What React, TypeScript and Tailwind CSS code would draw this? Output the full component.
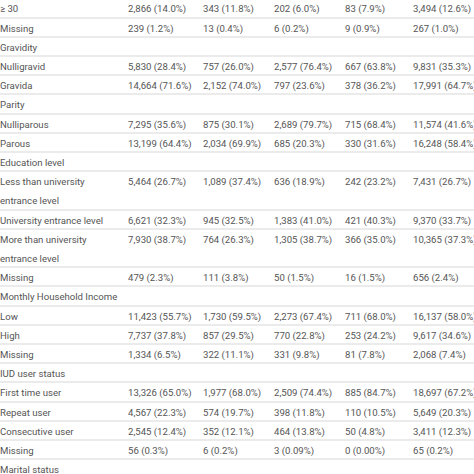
import React from "react";

type Row = { label: string[]; vals?: string[] };

const rows: Row[] = [
  { label: ["≥ 30"], vals: ["2,866 (14.0%)", "343 (11.8%)", "202 (6.0%)", "83 (7.9%)", "3,494 (12.6%)"] },
  { label: ["Missing"], vals: ["239 (1.2%)", "13 (0.4%)", "6 (0.2%)", "9 (0.9%)", "267 (1.0%)"] },
  { label: ["Gravidity"] },
  { label: ["Nulligravid"], vals: ["5,830 (28.4%)", "757 (26.0%)", "2,577 (76.4%)", "667 (63.8%)", "9,831 (35.3%)"] },
  { label: ["Gravida"], vals: ["14,664 (71.6%)", "2,152 (74.0%)", "797 (23.6%)", "378 (36.2%)", "17,991 (64.7%)"] },
  { label: ["Parity"] },
  { label: ["Nulliparous"], vals: ["7,295 (35.6%)", "875 (30.1%)", "2,689 (79.7%)", "715 (68.4%)", "11,574 (41.6%)"] },
  { label: ["Parous"], vals: ["13,199 (64.4%)", "2,034 (69.9%)", "685 (20.3%)", "330 (31.6%)", "16,248 (58.4%)"] },
  { label: ["Education level"] },
  { label: ["Less than university", "entrance level"], vals: ["5,464 (26.7%)", "1,089 (37.4%)", "636 (18.9%)", "242 (23.2%)", "7,431 (26.7%)"] },
  { label: ["University entrance level"], vals: ["6,621 (32.3%)", "945 (32.5%)", "1,383 (41.0%)", "421 (40.3%)", "9,370 (33.7%)"] },
  { label: ["More than university", "entrance level"], vals: ["7,930 (38.7%)", "764 (26.3%)", "1,305 (38.7%)", "366 (35.0%)", "10,365 (37.3%)"] },
  { label: ["Missing"], vals: ["479 (2.3%)", "111 (3.8%)", "50 (1.5%)", "16 (1.5%)", "656 (2.4%)"] },
  { label: ["Monthly Household Income"] },
  { label: ["Low"], vals: ["11,423 (55.7%)", "1,730 (59.5%)", "2,273 (67.4%)", "711 (68.0%)", "16,137 (58.0%)"] },
  { label: ["High"], vals: ["7,737 (37.8%)", "857 (29.5%)", "770 (22.8%)", "253 (24.2%)", "9,617 (34.6%)"] },
  { label: ["Missing"], vals: ["1,334 (6.5%)", "322 (11.1%)", "331 (9.8%)", "81 (7.8%)", "2,068 (7.4%)"] },
  { label: ["IUD user status"] },
  { label: ["First time user"], vals: ["13,326 (65.0%)", "1,977 (68.0%)", "2,509 (74.4%)", "885 (84.7%)", "18,697 (67.2%)"] },
  { label: ["Repeat user"], vals: ["4,567 (22.3%)", "574 (19.7%)", "398 (11.8%)", "110 (10.5%)", "5,649 (20.3%)"] },
  { label: ["Consecutive user"], vals: ["2,545 (12.4%)", "352 (12.1%)", "464 (13.8%)", "50 (4.8%)", "3,411 (12.3%)"] },
  { label: ["Missing"], vals: ["56 (0.3%)", "6 (0.2%)", "3 (0.09%)", "0 (0.00%)", "65 (0.2%)"] },
  { label: ["Marital status"] },
];

export default function App() {
  return (
    <div
      className="h-[474px] w-[474px] overflow-hidden bg-white text-[9.6px] text-[#555555]"
      style={{ fontFamily: "Roboto, 'Liberation Sans', sans-serif" }}
    >
      <div className="w-[474px] -mt-[0.6px]">
        {rows.map((row, i) => (
          <div
            key={i}
            className="grid grid-cols-[128px_75px_71px_71px_68px_1fr] leading-[19.2px] whitespace-nowrap shadow-[inset_0_-2px_0_#ebebeb]"
          >
            <div>
              {row.label.map((l, j) => (
                <div key={j}>{l}</div>
              ))}
            </div>
            {row.vals
              ? row.vals.map((v, j) => <div key={j}>{v}</div>)
              : null}
          </div>
        ))}
      </div>
    </div>
  );
}
